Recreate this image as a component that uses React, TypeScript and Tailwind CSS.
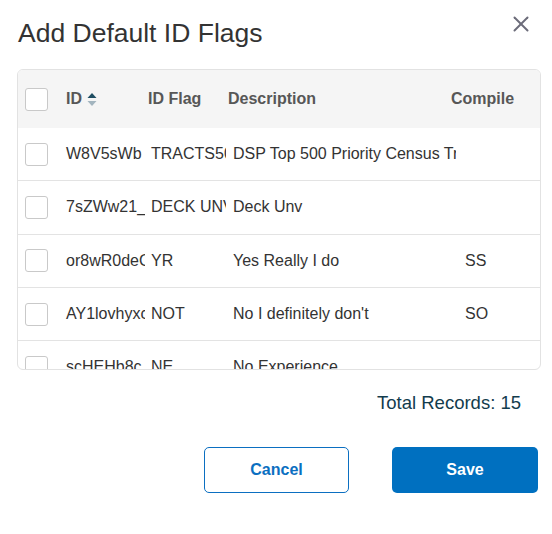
import React from 'react'

type Flag = {
  id: string
  flag: string
  description: string
  compile: string
}

const FLAGS: Flag[] = [
  { id: 'W8V5sWb  Qk2', flag: 'TRACTS500', description: 'DSP Top 500 Priority Census Tracts', compile: '' },
  { id: '7sZWw21_x9P', flag: 'DECK UNV', description: 'Deck Unv', compile: '' },
  { id: 'or8wR0deCqT', flag: 'YR', description: 'Yes Really I do', compile: 'SS' },
  { id: 'AY1lovhyxcM', flag: 'NOT', description: "No I definitely don't", compile: 'SO' },
  { id: 'scHEHb8c  R4', flag: 'NE', description: 'No Experience', compile: '' },
]

function Checkbox() {
  return <div className="w-[23px] h-[23px] shrink-0 rounded-[3px] border border-[#c9c9c9] bg-white" />
}

function SortIcon() {
  return (
    <svg width="10" height="13" viewBox="0 0 10 13" className="ml-[5px]">
      <path d="M5 0 L9.5 5 L0.5 5 Z" fill="#1f4e62" />
      <path d="M5 13 L9.5 8 L0.5 8 Z" fill="#a3b5bf" />
    </svg>
  )
}

export default function App() {
  return (
    <div
      className="w-[552px] h-[534px] bg-white text-[#333] overflow-hidden"
      style={{ fontFamily: '"Liberation Sans", Arial, Helvetica, sans-serif' }}
    >
      {/* Header */}
      <div className="flex items-start justify-between pt-4 pl-[18px] pr-[23px]">
        <h2 className="mt-[2px] text-[26.5px] leading-[30px] font-normal text-[#333]">Add Default ID Flags</h2>
        <button className="w-4 h-4 text-[#6c6c7a]" aria-label="Close">
          <svg width="16" height="16" viewBox="0 0 16 16" fill="none" stroke="currentColor" strokeWidth="2" strokeLinecap="round">
            <path d="M1.5 1.5 L14.5 14.5" />
            <path d="M14.5 1.5 L1.5 14.5" />
          </svg>
        </button>
      </div>

      {/* Table */}
      <div className="mt-[21px] ml-[17px] mr-[11px] h-[301px] border border-[#e2e2e2] rounded-[6px] overflow-hidden flex flex-col">
        <div className="h-[58px] shrink-0 bg-[#f5f5f5] flex items-center text-[16px] font-bold text-[#575757]">
          <div className="w-[40px] pl-[7px] flex items-center">
            <Checkbox />
          </div>
          <div className="w-[89px] pl-2 flex items-center">
            ID
            <SortIcon />
          </div>
          <div className="w-[77px] pl-[1px] whitespace-nowrap">ID Flag</div>
          <div className="w-[216px] pl-1">Description</div>
          <div className="flex-1 pl-[11px]">Compile</div>
        </div>
        <div className="flex-1 overflow-hidden">
          {FLAGS.map((f) => (
            <div
              key={f.id}
              className="h-[53.33px] border-b border-[#e3e3e3] flex items-center text-[16px] text-[#333] whitespace-nowrap"
            >
              <div className="w-[40px] shrink-0 pl-[7px] flex items-center">
                <Checkbox />
              </div>
              <div className="w-[87px] shrink-0 pl-2 overflow-hidden">{f.id}</div>
              <div className="w-[81px] shrink-0 pl-[6px] overflow-hidden">{f.flag}</div>
              <div className="w-[230px] shrink-0 pl-[7px] overflow-hidden">{f.description}</div>
              <div className="flex-1 pl-[9px]">{f.compile}</div>
            </div>
          ))}
        </div>
      </div>

      {/* Footer */}
      <div className="mt-[21px] pr-[31px] text-right text-[18.5px] leading-6 text-[#123c4d]">Total Records: 15</div>

      <div className="mt-8 pr-[14px] flex justify-end gap-[43px]">
        <button className="w-[145px] h-[46px] rounded-[5px] border border-[#0b6fc1] bg-white text-[16px] font-bold text-[#0b6fc1]">
          Cancel
        </button>
        <button className="w-[146px] h-[46px] rounded-[5px] bg-[#0070c0] text-[16px] font-bold text-white">
          Save
        </button>
      </div>
    </div>
  )
}
